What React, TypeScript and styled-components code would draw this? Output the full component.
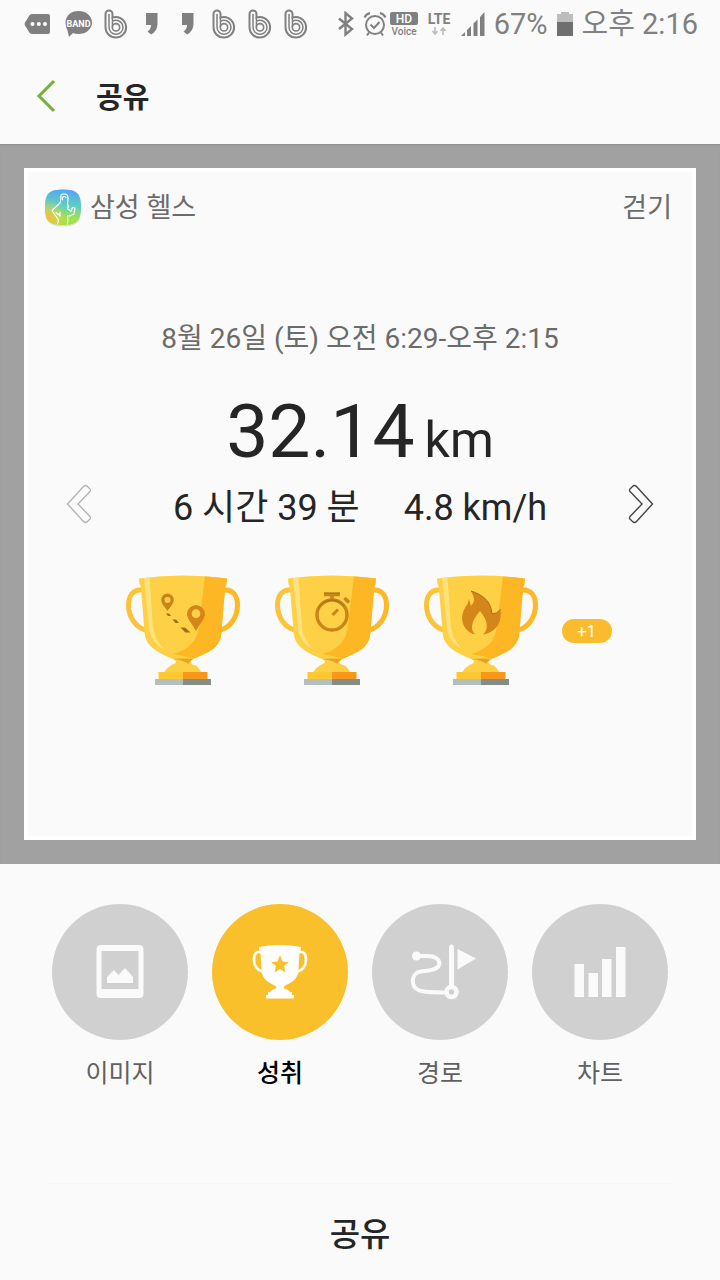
import React from "react";
import styled, { createGlobalStyle, css } from "styled-components";

const Global = createGlobalStyle`
  * { box-sizing: border-box; }
  body {
    margin: 0;
    background: #fafafa;
    color: #252525;
    font-family: Roboto, "Noto Sans CJK KR", sans-serif;
  }
  button { font: inherit; color: inherit; background: none; border: 0; padding: 0; cursor: pointer; }
  svg { display: block; flex: none; }
`;

const Page = styled.div`
  min-height: 100vh;
  display: flex;
  flex-direction: column;
`;

const StatusBar = styled.div`
  height: 48px;
  padding: 0 22px 0 24px;
  display: flex;
  align-items: center;
  justify-content: space-between;
  color: #808080;
`;

const Notifications = styled.div`
  display: flex;
  align-items: center;
  gap: 12px;
`;

const System = styled.div`
  display: flex;
  align-items: center;
  gap: 8px;
`;

const IconPair = styled.div`
  display: flex;
  align-items: center;
  gap: 3px;
`;

const StatusText = styled.span`
  font-size: 29px;
  line-height: 48px;
  white-space: nowrap;
`;

const AppBar = styled.header`
  height: 96px;
  padding: 0 24px;
  display: flex;
  align-items: center;
  gap: 24px;
`;

const BackButton = styled.button`
  width: 48px;
  height: 48px;
  display: grid;
  place-items: center;
`;

const Title = styled.h1`
  margin: 0;
  padding-top: 4px;
  font-size: 29px;
  line-height: 40px;
  font-weight: 700;
`;

const Preview = styled.main`
  padding: 24px;
  background: #a1a1a1;
  box-shadow: inset 0 2px 2px -1px #8c8c8c;
`;

const Card = styled.section`
  aspect-ratio: 1;
  border: 4px solid #fff;
  background: #fafafa;
  display: grid;
  grid-template-columns: 80px 1fr 80px;
  grid-template-rows: auto 1fr;
`;

const CardHeader = styled.div`
  grid-area: 1 / 1 / 2 / 4;
  padding: 16px 20px 0 15px;
  display: flex;
  align-items: center;
  justify-content: space-between;
  font-size: 27px;
  line-height: 40px;
  color: #6b6b6b;
`;

const Brand = styled.div`
  display: flex;
  align-items: center;
  gap: 7px;
`;

const ArrowButton = styled.button<{ $side: "left" | "right" }>`
  grid-area: ${(p) => (p.$side === "left" ? "1 / 1 / 3 / 2" : "1 / 3 / 3 / 4")};
  align-self: center;
  justify-self: ${(p) => (p.$side === "left" ? "end" : "start")};
  width: 56px;
  height: 56px;
  display: grid;
  place-items: center;
  color: ${(p) => (p.$side === "left" ? "#b4b4b4" : "#444")};
`;

const Summary = styled.div`
  grid-area: 2 / 2 / 3 / 3;
  padding-top: 91px;
  display: flex;
  flex-direction: column;
  align-items: center;
`;

const DateLine = styled.p`
  margin: 0;
  font-size: 28px;
  line-height: 40px;
  color: #6b6b6b;
  white-space: nowrap;
`;

const Distance = styled.p`
  margin: 28px 0 0;
  display: flex;
  align-items: baseline;
  gap: 10px;
  font-size: 75px;
  line-height: 88px;
`;

const Unit = styled.span`
  font-size: 50px;
`;

const Details = styled.p`
  margin: 0;
  display: flex;
  gap: 44px;
  font-size: 36px;
  line-height: 48px;
  white-space: nowrap;
`;

const Trophies = styled.div`
  margin-top: 42px;
  display: flex;
  align-items: center;
`;

const More = styled.span`
  width: 50px;
  margin-left: 6px;
  border-radius: 12px;
  background: #fabc2c;
  color: #fff;
  font-size: 17px;
  line-height: 24px;
  text-align: center;
`;

const Tabs = styled.nav`
  padding: 40px 40px 0;
  display: grid;
  grid-template-columns: repeat(4, 1fr);
`;

const Tab = styled.button<{ $active?: boolean }>`
  display: flex;
  flex-direction: column;
  align-items: center;
  gap: 14px;
  font-size: 25px;
  line-height: 40px;
  color: #606060;
  ${(p) => p.$active && css`color: #000; font-weight: 500;`}
`;

const Disc = styled.span<{ $active?: boolean }>`
  width: 136px;
  height: 136px;
  border-radius: 50%;
  display: grid;
  place-items: center;
  background: ${(p) => (p.$active ? "#fac02c" : "#d0d0d0")};
`;

const Footer = styled.footer`
  margin: auto 48px 0;
  border-top: 1px solid #f5f5f5;
  display: flex;
`;

const ShareButton = styled.button`
  flex: 1;
  height: 96px;
  padding-top: 6px;
  font-size: 33px;
  line-height: 48px;
  font-weight: 500;
`;

const MessageIcon = () => (
  <svg width="28" height="22" viewBox="0 0 28 22" aria-hidden="true">
    <path d="M8 1H24Q26 1 26 3V19Q26 21 24 21H8Q6 21 5 19L1 12.5Q0 11 1 9.5L5 3Q6 1 8 1Z" fill="#808080" />
    <g fill="#fff"><circle cx="8.500" cy="11" r="2" /><circle cx="14.800" cy="11" r="2" /><circle cx="21" cy="11" r="2" /></g>
  </svg>
);

const BandChatIcon = () => (
  <svg width="28" height="28" viewBox="0 0 28 28" aria-hidden="true">
    <path d="M14.500 1C22 1 28 5.800 28 12.500S22 24 14.500 24Q11 24 9 23L5 27L3.500 20.500Q1.500 17 1.500 12.500C1.500 5.800 7 1 14.500 1Z" fill="#808080" />
    <text x="14.500" y="16.500" textAnchor="middle" fontSize="9" fontWeight="700" fill="#fff">BAND</text>
  </svg>
);

const BIcon = () => (
  <svg width="24" height="30" viewBox="0 0 24 30" fill="none" stroke="#808080" aria-hidden="true">
    <path d="M1.500 5A3.500 3.500 0 0 1 8.500 5V8.600Q10.300 8 12 8A10.300 10.300 0 1 1 1.500 18.300Z" strokeWidth="2" />
    <path d="M5 5V18.300A7 7 0 1 0 12 11.300Q10 11.300 8.400 12.500" strokeWidth="1.500" />
    <path d="M8.400 8V18.300" strokeWidth="1.400" />
    <circle cx="12" cy="18.300" r="3.700" strokeWidth="1.600" />
  </svg>
);

const QuoteIcon = () => (
  <svg width="24" height="24" viewBox="0 0 24 24" aria-hidden="true">
    <path d="M6 1H17.500V12Q17.500 19 11 22.500L7.500 19.500Q11 17 11 13H6Z" fill="#808080" />
  </svg>
);

const BluetoothIcon = () => (
  <svg width="18" height="26" viewBox="0 0 18 26" fill="none" stroke="#808080" strokeWidth="2.400" aria-hidden="true">
    <path d="M2 7.500L15 18L8.500 23.500V2L15 7.500L2 18" />
  </svg>
);

const AlarmIcon = () => (
  <svg width="24" height="26" viewBox="0 0 24 26" fill="none" stroke="#808080" strokeWidth="2" aria-hidden="true">
    <circle cx="12" cy="14" r="9" />
    <path d="M7.500 13.500L11 17L16.500 11M1.500 6.500Q3 3 7 2M22.500 6.500Q21 3 17 2M6 21.500L4 24.500M18 21.500L20 24.500" />
  </svg>
);

const HdVoiceIcon = () => (
  <svg width="28" height="30" viewBox="0 0 28 30" aria-hidden="true">
    <rect y="3" width="28" height="13" rx="2" fill="#808080" />
    <text x="14" y="14" textAnchor="middle" fontSize="12" fontWeight="500" fill="#fff">HD</text>
    <text x="14" y="26" textAnchor="middle" fontSize="10" fontWeight="500" fill="#808080">Voice</text>
  </svg>
);

const LteIcon = () => (
  <svg width="26" height="30" viewBox="0 0 26 30" aria-hidden="true">
    <text x="13" y="15" textAnchor="middle" fontSize="14" fontWeight="700" fill="#808080">LTE</text>
    <g stroke="#bcbcbc" strokeWidth="1.600" fill="none">
      <path d="M9 18V25M6.500 22L9 25L11.500 22M17 26V19M14.500 22L17 19L19.500 22" />
    </g>
  </svg>
);

const SignalIcon = () => (
  <svg width="26" height="26" viewBox="0 0 26 26" fill="#808080" aria-hidden="true">
    <path d="M1 25L5 21V25ZM7 25V19L11 15V25ZM13.500 25V12.500L17.500 8.500V25ZM20 25V6L24.500 1V25Z" />
  </svg>
);

const BatteryIcon = () => (
  <svg width="18" height="26" viewBox="0 0 18 26" aria-hidden="true">
    <path d="M1 3H5V1H13V3H17V12H1Z" fill="#bdbdbd" />
    <path d="M1 11H17V25H1Z" fill="#6f6f6f" />
  </svg>
);

const HealthLogo = () => (
  <svg width="40" height="40" viewBox="0 0 40 40" aria-hidden="true">
    <defs>
      <linearGradient id="base" x1="0.550" y1="0" x2="0.450" y2="1">
        <stop offset="0" stopColor="#55a5f2" />
        <stop offset=".45" stopColor="#5fd0bd" />
        <stop offset=".8" stopColor="#a2e34c" />
        <stop offset="1" stopColor="#a0dc43" />
      </linearGradient>
      <radialGradient id="warm" cx="0" cy=".85" r=".6">
        <stop offset="0" stopColor="#ffb13c" />
        <stop offset="1" stopColor="#ffd94a" stopOpacity="0" />
      </radialGradient>
    </defs>
    <path d="M20 3C34 3 38 7 38 20.500S34 38.500 20 38.500S2 34 2 20.500S6 3 20 3Z" fill="#ddd" />
    <path d="M20 1.500C34 1.500 38 5.500 38 19S34 37 20 37S2 32.500 2 19S6 1.500 20 1.500Z" fill="url(#base)" />
    <path d="M20 1.500C34 1.500 38 5.500 38 19S34 37 20 37S2 32.500 2 19S6 1.500 20 1.500Z" fill="url(#warm)" />
    <g fill="none" stroke="#fff" strokeWidth="1.200" strokeLinejoin="round" strokeLinecap="round">
      <path d="M18 10Q17 6 21 6Q25.500 6 25 11L24.500 16M19.500 12V9.500Q21.500 7.500 23 9.500M18 10L17 15L9 22.500L15.500 32L14.500 36M13 24.500L17 28V24M24.500 16Q26 18 24.500 21M25 21L28 23.500L29.500 19.500L32 20L31 26L27 28L24.500 27.500Q25 32 24.500 36" />
    </g>
  </svg>
);

const Chevron = ({ flip }: { flip?: boolean }) => (
  <svg width="28" height="40" viewBox="0 0 28 40" fill="none" stroke="currentColor" strokeWidth="1.400" strokeLinejoin="round" aria-hidden="true">
    <path transform={flip ? "translate(28 0) scale(-1 1)" : undefined} d="M1.500 20L17.500 2.500Q19.500 .500 21.500 2.500L23.500 4.500Q25.500 6 23.500 8L12 20L23.500 32Q25.500 34 23.500 35.500L21.500 37.500Q19.500 39.500 17.500 37.500Z" />
  </svg>
);

const RouteMark = () => (
  <g>
    <path fillRule="evenodd" fill="#c98518" d="M58.500 19.500A6.200 6.200 0 0 1 64.700 26C64.700 30 61 33 58.500 37C56 33 52.300 30 52.300 26A6.200 6.200 0 0 1 58.500 19.500ZM58.500 23A3 3 0 1 0 58.500 29A3 3 0 1 0 58.500 23Z" />
    <path fillRule="evenodd" fill="#d5861a" d="M87 31A9.200 9.200 0 0 1 96 40C96 45 90.500 50 87 57C83.500 50 78 45 78 40A9.200 9.200 0 0 1 87 31ZM87 35.200A4.400 4.400 0 1 0 87 44A4.400 4.400 0 1 0 87 35.200Z" />
    <path d="M57 39.500H60L62 42H59ZM63.500 45.500H67L70 49H66.500ZM71.500 53.500H76L81.500 58.500H76.500Z" fill="#9d701b" />
  </g>
);

const TimerMark = () => (
  <g fill="none" stroke="#c98518">
    <circle cx="74" cy="41" r="15" strokeWidth="3.400" />
    <path d="M66 20.500H82M74 21V26M86.500 24L91 28.500" strokeWidth="3.600" />
    <path d="M74.500 41L80 35.500" strokeWidth="3" />
    <path d="M60.500 34.500A15 15 0 0 1 86 32M66 19H82" strokeWidth="1" stroke="#9d701b" />
  </g>
);

const FlameMark = () => (
  <g>
    <path d="M64 17C76 21 84 27 85 40Q90 40 93.500 35.500C95 48 90 58 76 60.500Q85 52 73 37Q60 52 68 60.500C55 57 52 43 58.500 33Q61 30 62 25L64 32Q70 27 64 17Z" fill="#d5861a" />
    <path d="M64 17C76 21 84 27 85 40Q90 40 93.500 35.500" fill="none" stroke="#9d701b" strokeWidth="1" />
  </g>
);

const Trophy = ({ label, children }: { label: string; children: React.ReactNode }) => (
  <svg width="149" height="114" viewBox="0 0 149 114" role="img" aria-label={label}>
    <g fill="none" strokeWidth="5">
      <path d="M33 16C24 15 19.500 22 19.500 31.500C19.500 44 28 54 37 56" stroke="#fcc33a" />
      <path d="M115 16C124 15 128.500 22 128.500 31.500C128.500 44 120 54 111 56" stroke="#fcb827" />
    </g>
    <path d="M30 4.500Q74 -1.500 118 4.500L117.500 10Q116 12 116 15L112.500 57C112 72 104 77 84 85Q78 90 88 92L90 98H60L62 91Q71 88 64 85C44 77 36 70 35.500 57L32 15Q32 12 30.500 10Z" fill="#fdd045" />
    <path d="M96 2.500Q107 3 118 4.500L117.500 10Q116 12 116 15L112.500 57C112 72 104 77 84 85Q74 81 64 80C80 76 88 66 89.500 55Z" fill="#fdb724" />
    <path d="M35 4L40.500 3.500L44 54Q47 68 56 76Q43 69 40.500 57Z" fill="#ffe27d" />
    <path d="M64 85Q74 84 84 85Q79 88 80 90Q74 86 64 85Z" fill="#e8a41c" />
    <path d="M55.500 98Q59 91 68 90H80Q89 91 92 98Z" fill="#fdcf45" />
    <path d="M49.500 98H74V105H49.500Z" fill="#fdc633" />
    <path d="M74 98H98.500V105H74Z" fill="#f7981d" />
    <path d="M46 105H74V111H46Z" fill="#b1c0bf" />
    <path d="M74 105H102V111H74Z" fill="#848d88" />
    {children}
  </svg>
);

const ImageTabIcon = () => (
  <svg width="56" height="56" viewBox="0 0 56 56" aria-hidden="true">
    <path fillRule="evenodd" fill="#fafafa" d="M9 1H47Q51.500 1 51.500 5.500V50Q51.500 54 47 54H9Q4.500 54 4.500 50V5.500Q4.500 1 9 1ZM9.500 7V45H46.500V7Z" />
    <path fill="#fafafa" d="M15 33L22 26L26.500 31L33 24L41 33V39H15Z" />
  </svg>
);

const TrophyTabIcon = () => (
  <svg width="56" height="56" viewBox="0 0 56 56" aria-hidden="true">
    <g fill="none" stroke="#fff" strokeWidth="2.600">
      <path d="M10 9C4 6 2 10 2 16C2 22 6 27 11 27.500" />
      <path d="M46 9C52 6 54 10 54 16C54 22 50 27 45 27.500" />
    </g>
    <path fill="#fff" d="M7 3Q28 -1 49 3V6L47.500 8L46.500 26C46 36 38 39 32.500 42Q30 44 36 46L38 48H18L20 46Q26 44 23.500 42C18 39 10 36 9.500 26L8.500 8L7 6ZM16 48H40V51H42V54.500H14V51H16Z" />
    <path fill="#fac02c" d="M28 11L30.500 17.500L37 18L32 22L33.500 28.500L28 25L22.500 28.500L24 22L19 18L25.500 17.500Z" />
  </svg>
);

const RouteTabIcon = () => (
  <svg width="72" height="56" viewBox="-2 0 72 56" aria-hidden="true">
    <circle cx="10.500" cy="12" r="4.500" fill="#fafafa" />
    <path d="M10.500 12H22C36 12 38 25 23 26.500L15 27.500C4 29 4 45 15 47Q22 48.500 45 48.500" fill="none" stroke="#fafafa" strokeWidth="4" />
    <path d="M45.500 3V43" stroke="#fafafa" strokeWidth="5" strokeLinecap="round" />
    <path d="M51.500 5L70 14.500L51.500 25.500Z" fill="#fafafa" />
    <circle cx="45.500" cy="48" r="5" fill="#d0d0d0" stroke="#fafafa" strokeWidth="4.500" />
  </svg>
);

const ChartTabIcon = () => (
  <svg width="56" height="56" viewBox="0 0 56 56" fill="#fafafa" aria-hidden="true">
    <path d="M2.500 20H12V53H2.500ZM16.500 29H26V53H16.500ZM30 15H39.500V53H30ZM44 3H53.500V53H44Z" />
  </svg>
);

const tabs = [
  { label: "이미지", icon: <ImageTabIcon /> },
  { label: "성취", icon: <TrophyTabIcon />, active: true },
  { label: "경로", icon: <RouteTabIcon /> },
  { label: "차트", icon: <ChartTabIcon /> },
];

export default function App() {
  return (
    <Page>
      <Global />
      <StatusBar>
        <Notifications>
          <MessageIcon />
          <BandChatIcon />
          <BIcon />
          <QuoteIcon />
          <QuoteIcon />
          <BIcon />
          <BIcon />
          <BIcon />
        </Notifications>
        <System>
          <BluetoothIcon />
          <IconPair>
            <AlarmIcon />
            <HdVoiceIcon />
          </IconPair>
          <LteIcon />
          <SignalIcon />
          <StatusText>67%</StatusText>
          <BatteryIcon />
          <StatusText>오후 2:16</StatusText>
        </System>
      </StatusBar>
      <AppBar>
        <BackButton aria-label="뒤로">
          <svg width="24" height="34" viewBox="0 0 24 34" fill="none" stroke="#73b13c" strokeWidth="3" aria-hidden="true">
            <path d="M18 2L3 17L18 32" />
          </svg>
        </BackButton>
        <Title>공유</Title>
      </AppBar>
      <Preview>
        <Card>
          <CardHeader>
            <Brand>
              <HealthLogo />
              <span>삼성 헬스</span>
            </Brand>
            <span>걷기</span>
          </CardHeader>
          <ArrowButton $side="left" aria-label="이전">
            <Chevron />
          </ArrowButton>
          <Summary>
            <DateLine>8월 26일 (토) 오전 6:29-오후 2:15</DateLine>
            <Distance>
              32.14<Unit>km</Unit>
            </Distance>
            <Details>
              <span>6 시간 39 분</span>
              <span>4.8 km/h</span>
            </Details>
            <Trophies>
              <Trophy label="거리"><RouteMark /></Trophy>
              <Trophy label="시간"><TimerMark /></Trophy>
              <Trophy label="칼로리"><FlameMark /></Trophy>
              <More>+1</More>
            </Trophies>
          </Summary>
          <ArrowButton $side="right" aria-label="다음">
            <Chevron flip />
          </ArrowButton>
        </Card>
      </Preview>
      <Tabs>
        {tabs.map((t) => (
          <Tab key={t.label} $active={t.active} aria-pressed={!!t.active}>
            <Disc $active={t.active}>{t.icon}</Disc>
            {t.label}
          </Tab>
        ))}
      </Tabs>
      <Footer>
        <ShareButton>공유</ShareButton>
      </Footer>
    </Page>
  );
}
